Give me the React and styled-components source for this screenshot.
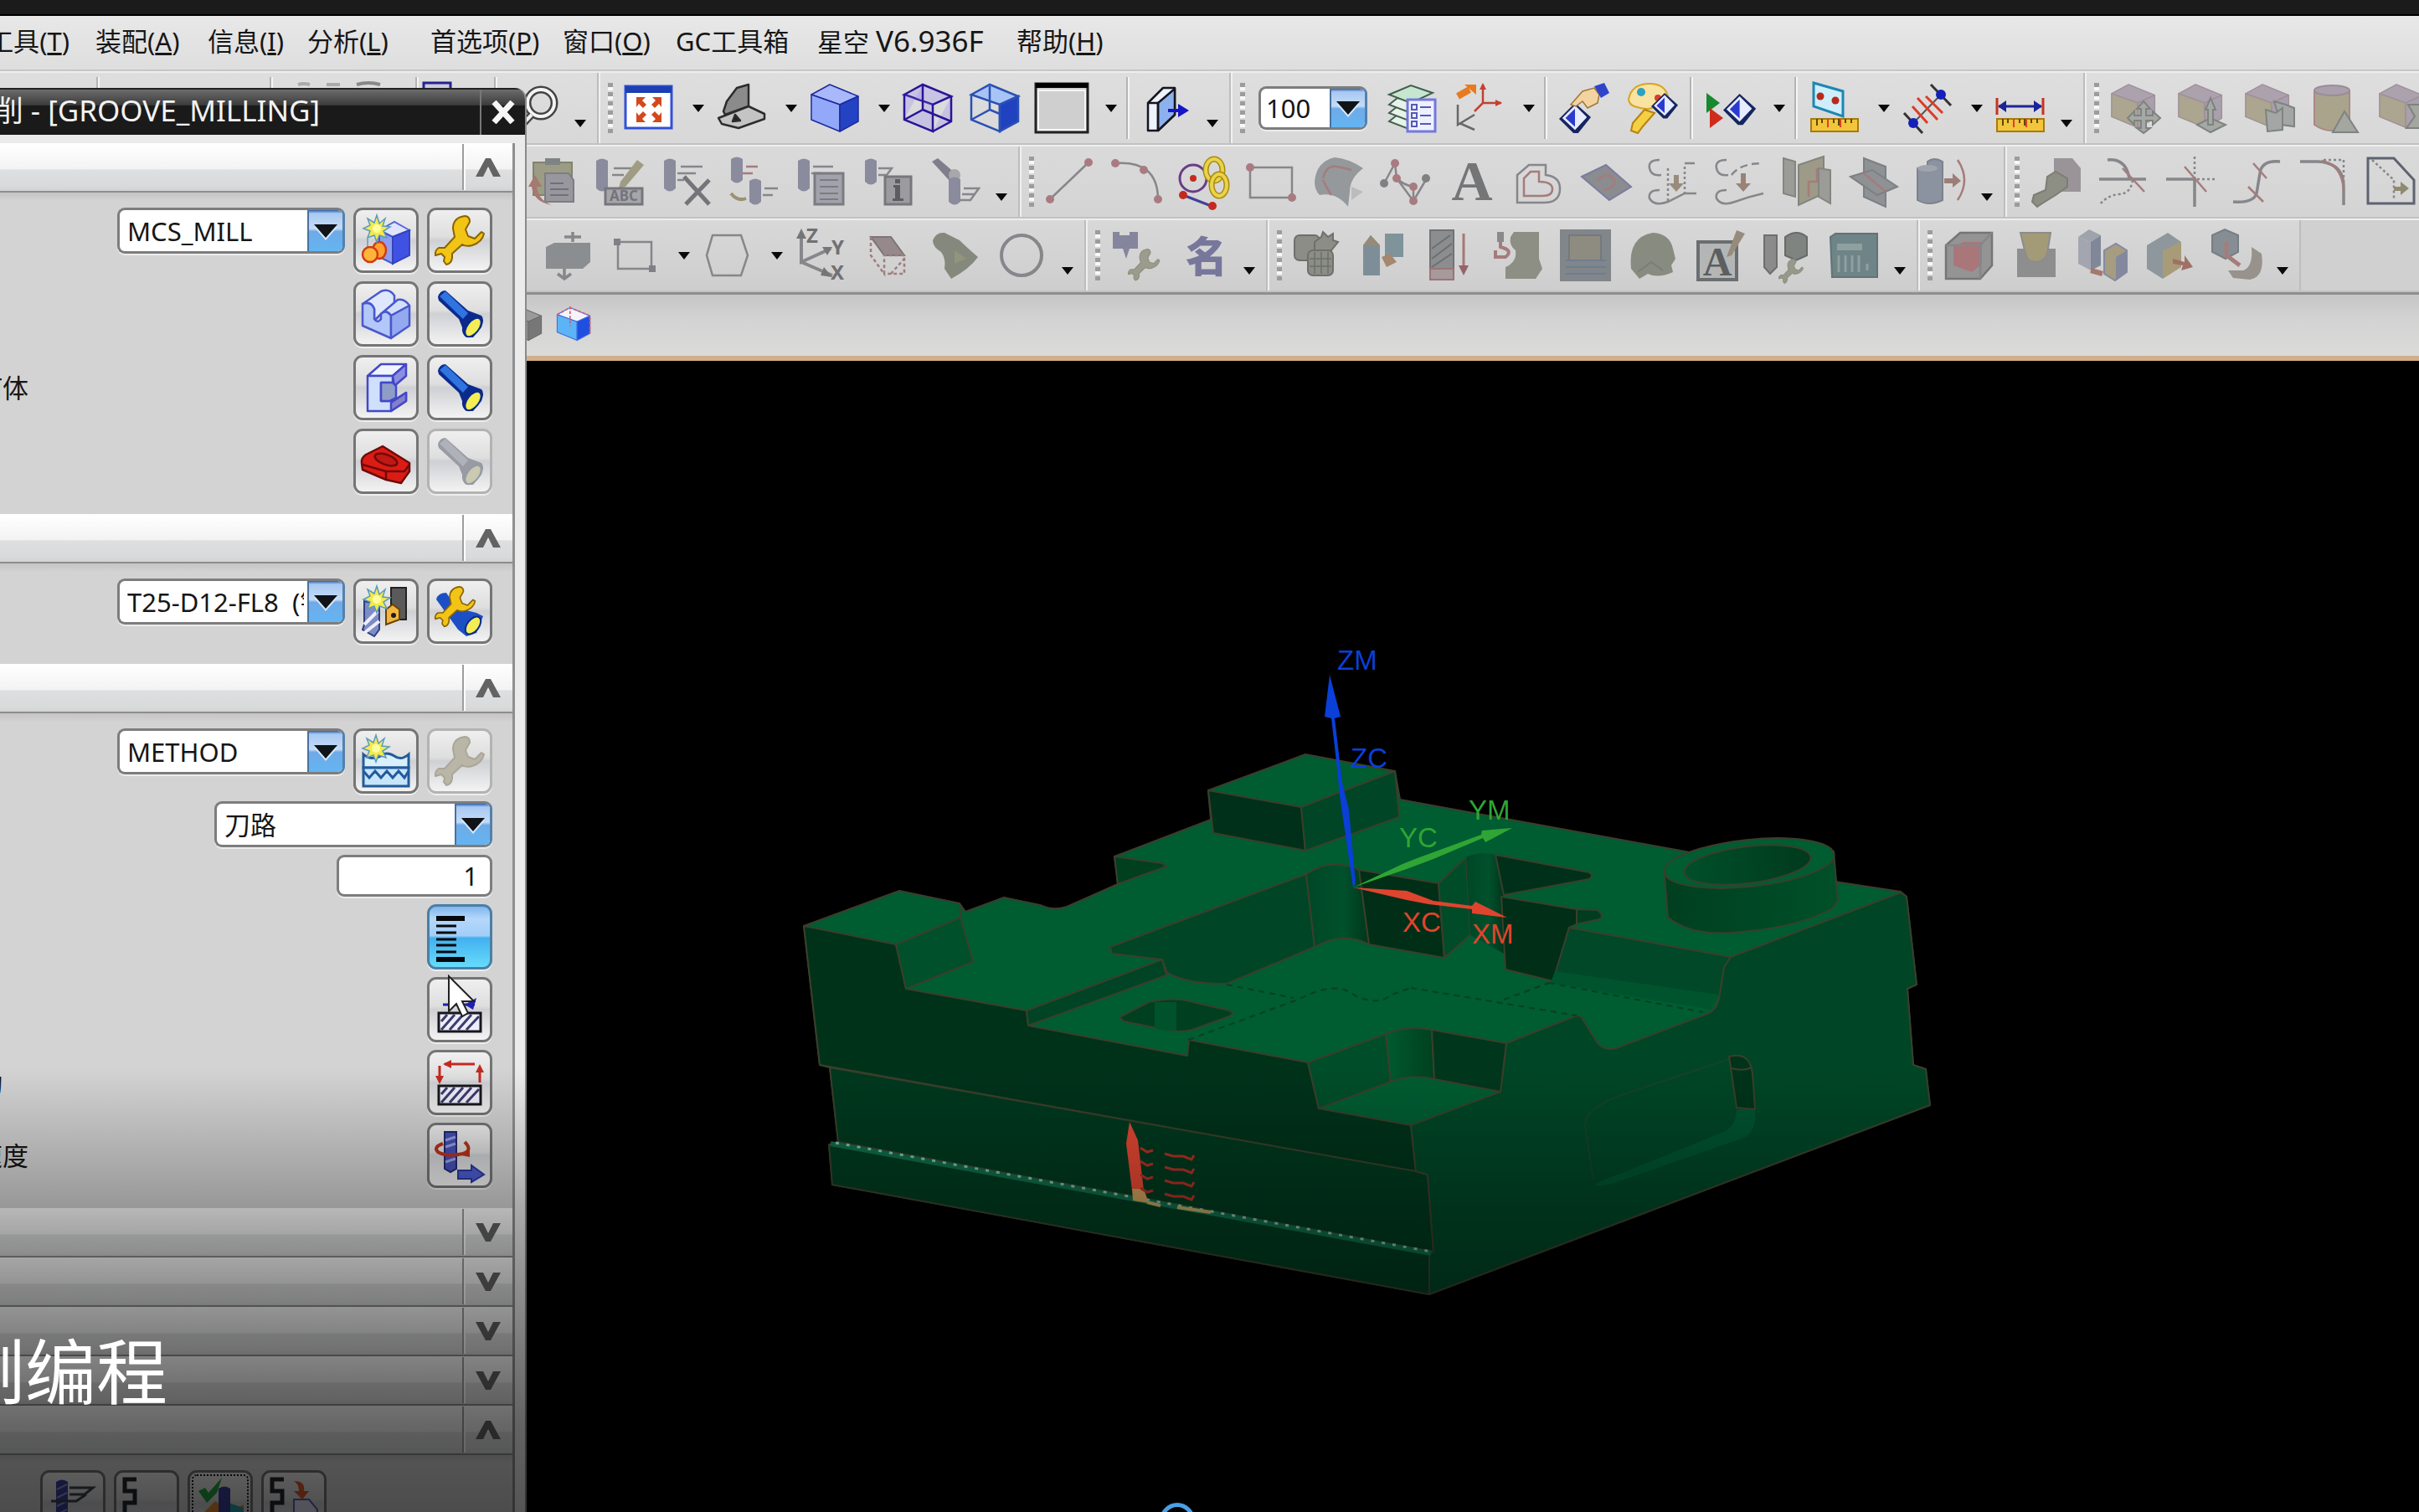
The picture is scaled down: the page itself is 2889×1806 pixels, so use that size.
import React from "react";
import styled, { createGlobalStyle } from "styled-components";

const Global = createGlobalStyle`
  * { box-sizing: border-box; }
  body { margin: 0; background: #000; overflow: hidden; }
  button, input, select { font: inherit; color: inherit; margin: 0; }
`;

const Page = styled.div`
  position: relative;
  display: flex;
  flex-direction: column;
  min-height: 100vh;
  overflow: hidden;
  background: #000;
  color: #161616;
  font: 31px/40px "Noto Sans", "Noto Sans CJK SC", sans-serif;
`;

const TopStrip = styled.div`
  height: 19px;
  background: #1b1b1b;
  border-bottom: 2px solid #000;
`;

/* ---------- menu ---------- */
const MenuBar = styled.nav`
  display: flex;
  align-items: center;
  height: 66px;
  padding-bottom: 4px;
  background: linear-gradient(#e8e8e8, #dedede);
  border-bottom: 2px solid #c6c6c6;
`;

const MenuItem = styled.button`
  flex: none;
  width: ${(p) => p.$w}px;
  padding: 0;
  border: 0;
  background: none;
  text-align: ${(p) => (p.$end ? "right" : "left")};
  padding-right: ${(p) => (p.$end ? 31 : 0)}px;
  white-space: nowrap;
  direction: ${(p) => (p.$end ? "rtl" : "ltr")};
`;

const MenuText = styled.span`
  unicode-bidi: isolate;
  direction: ltr;
`;

const Version = styled.span`
  font-size: 35px;
`;

/* ---------- tool bars ---------- */
const ToolRow = styled.div`
  display: flex;
  height: 88px;
  background: linear-gradient(${(p) => p.$from}, ${(p) => p.$to});
  border-top: 2px solid #eeeeee;
  border-bottom: 2px solid #c2c2c2;
  overflow: hidden;
`;

const Group = styled.div`
  flex: none;
  display: flex;
  align-items: center;
  justify-content: ${(p) => (p.$w ? "flex-end" : "flex-start")};
  width: ${(p) => (p.$w ? p.$w + "px" : "auto")};
  border-right: 2px solid #bdbdbd;
  box-shadow: 2px 0 0 #f0f0f0;
`;

const Rest = styled.div`
  flex: 1;
  background: #d0d0d0;
`;

const Grip = styled.div`
  flex: none;
  width: 20px;
  height: 60px;
  background: repeating-linear-gradient(#9c9c9c 0 5px, #f8f8f8 5px 9px, transparent 9px 11px) 11px 0 / 6px 100% no-repeat;
`;

const Tool = styled.button`
  flex: none;
  display: flex;
  align-items: center;
  justify-content: center;
  width: 80px;
  height: 76px;
  padding: 0;
  border: 0;
  background: none;
`;

const Caret = styled.button`
  flex: none;
  display: flex;
  justify-content: center;
  align-items: center;
  width: ${(p) => (p.$end ? 35 : 31)}px;
  height: 60px;
  padding: ${(p) => (p.$end ? "36px 6px 0 0" : "0 0 0 6px")};
  border: 0;
  background: none;
  &::after {
    content: "";
    border: 7px solid transparent;
    border-top: 9px solid #0a0a0a;
    border-bottom: 0;
  }
`;

const Sep = styled.div`
  flex: none;
  width: 14px;
  height: 74px;
  background: linear-gradient(90deg, #b4b4b4 0 2px, #f5f5f5 2px 4px) 6px 0 / 4px 100% no-repeat;
`;

const Space = styled.div`
  flex: none;
  width: ${(p) => p.$w}px;
`;

const SelectionBar = styled.div`
  display: flex;
  align-items: center;
  height: 82px;
  padding: 0 0 4px 606px;
  gap: 16px;
  border-top: 3px solid #8e8e8e;
  border-bottom: 6px solid #d3ae8a;
  background: linear-gradient(#c6c6c6, #d3d3d3 40%, #dbdbda);
`;

/* ---------- fields ---------- */
const Combo = styled.span`
  flex: none;
  display: grid;
  width: ${(p) => p.$w}px;
  height: ${(p) => p.$h || 55}px;
  margin: ${(p) => p.$m || "0"};
  border: 3px solid #7d7d7d;
  border-right-color: #5580ab;
  border-radius: 9px;
  box-shadow: 0 2px 0 #ececec;
  background: #fff;
  overflow: hidden;
`;

const Select = styled.select`
  grid-area: 1 / 1;
  appearance: none;
  width: 100%;
  height: 100%;
  min-width: 0;
  padding: 0 46px 0 ${(p) => p.$pad || 9}px;
  border: 0;
  background: transparent;
  outline: 0;
`;

const ComboArrow = styled.span`
  grid-area: 1 / 1;
  justify-self: end;
  display: flex;
  align-items: center;
  justify-content: center;
  width: 42px;
  pointer-events: none;
  border-left: 2px solid #49719e;
  background: linear-gradient(#2c62b0 0, #a9c9f2 8%, #c4dbf6 45%, #6faae8 52%, #63b5f2);
  &::after {
    content: "";
    border: 14px solid transparent;
    border-top: 16px solid #101418;
    border-bottom: 0;
    filter: drop-shadow(0 3px 0 #d8eafc);
  }
`;

const NumberInput = styled.input`
  width: 186px;
  height: 50px;
  padding: 0 14px;
  border: 3px solid #7d7d7d;
  border-radius: 9px;
  box-shadow: 0 2px 0 #ececec;
  background: #fff;
  text-align: right;
`;

/* ---------- dialog ---------- */
const Dialog = styled.section`
  position: absolute;
  left: 0;
  top: 105px;
  bottom: 0;
  width: 629px;
  overflow: hidden;
  border-radius: 0 14px 0 0;
  background: #ebebeb;
  border-right: 2px solid #8a8a8a;
`;

const TitleBar = styled.header`
  display: flex;
  justify-content: space-between;
  align-items: center;
  height: 56px;
  color: #f2f2f2;
  border-top: 2px solid #222;
  background: linear-gradient(#6c6c6c, #3c3c3c 34%, #1a1a1a 36%);
`;

const Title = styled.h1`
  display: flex;
  justify-content: flex-end;
  width: 382px;
  margin: 0;
  padding-bottom: 4px;
  overflow: hidden;
  white-space: nowrap;
  font: inherit;
  font-size: 35px;
`;

const Close = styled.button`
  display: flex;
  align-items: center;
  justify-content: center;
  width: 54px;
  height: 54px;
  padding: 0;
  border: 0;
  border-left: 2px solid #777;
  background: none;
`;

const Sections = styled.div`
  margin: 10px 12px 0 0;
  border-right: 3px solid #8f8f8f;
  background: #d3d3d3;
`;

const Head = styled.button`
  display: flex;
  justify-content: flex-end;
  align-items: center;
  width: 100%;
  height: 59px;
  padding: 0;
  border: 0;
  border-bottom: 2px solid #8d8d8d;
  background: linear-gradient(#fff, #f3f3f3 54%, #dedfe0 56%, #d9dadb 90%, #d3d3d3);
`;

const HeadMark = styled.span`
  display: flex;
  justify-content: center;
  align-items: center;
  width: 60px;
  height: 55px;
  border-left: 2px solid #9d9d9d;
  box-shadow: inset 2px 0 0 #fff;
`;

const Body = styled.div`
  display: flex;
  flex-direction: column;
  gap: ${(p) => p.$gap || 10}px;
  padding: 18px 24px 24px 0;
  background: linear-gradient(#c4c4c4, #d3d3d3 10px);
`;

const Line = styled.div`
  display: flex;
  justify-content: space-between;
  align-items: center;
`;

const Label = styled.span`
  display: flex;
  justify-content: flex-end;
  width: ${(p) => p.$w || 0}px;
  overflow: hidden;
  white-space: nowrap;
`;

const Controls = styled.div`
  display: flex;
  align-items: flex-start;
  gap: 10px;
`;

const IconButton = styled.button`
  flex: none;
  display: flex;
  align-items: center;
  justify-content: center;
  width: 78px;
  height: 78px;
  padding: 0;
  border: 3px solid ${(p) => (p.$on ? "#4b7fa6" : p.disabled ? "#b3b3b3" : "#757575")};
  border-radius: 11px;
  outline: ${(p) => (p.$focus ? "2px dotted #111" : "0")};
  outline-offset: -7px;
  box-shadow: 0 2px 0 #eee;
  background: ${(p) =>
    p.$on
      ? "linear-gradient(#7fb6ee, #b5d7fa 20%, #a3cdf7 48%, #43b0ef 52%, #66dcfa)"
      : "linear-gradient(#efefef, #dedede 44%, #cfd0d4 50%, #f3f3f3)"};
`;

const Actions = styled.div`
  display: flex;
  gap: 10px;
  padding-left: 48px;
`;

/* ---------- canvas and overlays ---------- */
const Viewport = styled.main`
  flex: 1;
  background: #000;
`;

const Scene = styled.svg`
  display: block;
  width: 100%;
`;

const Shade = styled.div`
  position: absolute;
  inset: auto 0 0 0;
  height: 530px;
  pointer-events: none;
  background: linear-gradient(
    rgba(0, 0, 0, 0), rgba(0, 0, 0, 0.28) 31%, rgba(0, 0, 0, 0.41) 52%,
    rgba(0, 0, 0, 0.5) 67%, rgba(0, 0, 0, 0.58) 80%, rgba(0, 0, 0, 0.64)
  );
`;

const Caption = styled.p`
  position: absolute;
  left: 0;
  bottom: 110px;
  display: flex;
  justify-content: flex-end;
  width: 200px;
  margin: 0;
  overflow: hidden;
  white-space: nowrap;
  color: #fff;
  font: 85px/124px "Noto Sans CJK SC", sans-serif;
`;

const Pointer = styled.svg`
  position: absolute;
  left: 534px;
  top: 1164px;
`;

const Thumb = styled.span`
  position: absolute;
  left: 1385px;
  bottom: -31px;
  width: 42px;
  height: 42px;
  border: 5px solid #4a9fe6;
  border-radius: 50%;
`;

/* ---------- icon drawings, all on a 60 x 60 field ---------- */
const Cube = ({ a = "#a9b4f4", b = "#7f92f2", c = "#2438b8", s = "#1c2a9c", x = 0, y = 0, k = 1 }) => (
  <g transform={`translate(${x} ${y}) scale(${k})`} stroke={s} strokeWidth="1.5" strokeLinejoin="round">
    <path d="M2 14 24 2 58 16 36 26Z" fill={a} />
    <path d="M2 14 36 26V58L2 44Z" fill={b} />
    <path d="M36 26 58 16V46L36 58Z" fill={c} />
  </g>
);
const Drill = ({ x = 0, y = 0, h = 40, c = "#8b8b9e" }) => (
  <path transform={`translate(${x} ${y})`} d={`M0 3Q7-2 14 3V${h - 4}Q7 ${h + 3} 0 ${h - 4}Z`} fill={c} />
);
const Wrench = ({ f = "#f2c416", s = "#8a6400", x = 0, y = 0, k = 1 }) => (
  <path transform={`translate(${x} ${y}) scale(${k})`} d="M36 1Q22 3 22 16L24 26 12 39 5 39Q0 42 1 48L8 46 12 50 11 55 14 59Q20 58 21 51V46L33 35Q38 38 45 36 57 32 59 22L56 20 48 28 40 25 37 17 42 8Q42 1 36 1Z" fill={f} stroke={s} strokeWidth="2" strokeLinejoin="round" />
);
const Torch = ({ a = "#2f74e0", b = "#0c2a8c", y1 = "#f4ee54" }) => (
  <g>
    <path d="M4 10Q6 2 13 2L40 26 56 32Q60 36 56 46L46 58 38 58Q32 54 33 46L29 36 5 14Z" fill={b} />
    <path d="M6 9 13 3 40 29 34 36Z" fill={a} />
    <ellipse cx="46" cy="46" rx="13" ry="7" transform="rotate(-52 46 46)" fill={y1} stroke={b} strokeWidth="2" />
  </g>
);
const Star = ({ x = 16, y = 14 }) => (
  <g transform={`translate(${x} ${y})`}>
    <path d="M0-16 3-6 10-12 7-3 16-2 8 3 12 11 3 8 0 16-3 8-11 11-8 3-16 0-8-4-11-12-3-7Z" fill="#f5ea4a" stroke="#5a9bbd" strokeWidth="1.5" />
    <circle r="5" fill="#ffffa0" />
  </g>
);
const Diamond = ({ x = 0, y = 0, k = 1 }) => (
  <g transform={`translate(${x} ${y}) scale(${k})`}>
    <path d="M20 0 40 18 24 38 18 38 0 20Z" fill="#15255f" />
    <path d="M20 3 35 18 20 34 4 19Z" fill="#e8ecff" />
    <path d="M20 7V30L8 19Z" fill="#2b3bd0" />
  </g>
);
const Ruler = ({ y = 42 }) => (
  <g>
    <path d={`M2 ${y}H58V${y + 15}H2Z`} fill="#f1c63c" stroke="#a87a10" strokeWidth="2" />
    <path d={`M9 ${y}v8M15 ${y}v5M29 ${y}v5M35 ${y}v8M43 ${y}v5M50 ${y}v5`} stroke="#5e4700" strokeWidth="2" />
    <path d={`M22 ${y}v10M37 ${y}v10`} stroke="#e04020" strokeWidth="2" />
  </g>
);
const GP = { a: "#aba2ae", b: "#aca58f", c: "#a8a0ac", s: "#a08f98" };
const ln = { fill: "none", stroke: "#86868b", strokeWidth: 2.5 };
const red = { fill: "none", stroke: "#a57c7c", strokeWidth: 2.5 };
const Dot = ({ x, y, c = "#a97b80" }) => <circle cx={x} cy={y} r="5" fill={c} />;
const Pass = ({ x = 0, y = 0 }) => (
  <path transform={`translate(${x} ${y})`} d="M2 2H20L15 9H0M-2 16H10L15 9" {...ln} />
);
const Hatch = () => (
  <g>
    <path d="M5 34H55V56H5Z" fill="#eeeefa" stroke="#16161c" strokeWidth="3" />
    <path d="M8 54 24 36M18 54 34 36M28 54 44 36M38 54 53 38M8 44 15 36" stroke="#3c3c6c" strokeWidth="3" />
  </g>
);

const ICONS = {
  windowTop: <g><path d="M-8 0H24V60H-8Z" fill="#ccd" stroke="#24248c" strokeWidth="3" /></g>,
  greyTop: <path d="M16 2Q22 0 30 2M50 2H66" stroke="#aaa" strokeWidth="4" fill="none" />,
  greyTop2: <path d="M6 2Q20-2 34 2" stroke="#888" strokeWidth="4" fill="none" />,
  zoom: <g fill="none"><circle cx="38" cy="24" r="16" stroke="#444" strokeWidth="9" /><circle cx="38" cy="24" r="16" stroke="#f4f4f4" strokeWidth="4" /><path d="M27 38 8 58" stroke="#444" strokeWidth="9" /><path d="M27 38 8 58" stroke="#eee" strokeWidth="4" /></g>,
  fit: <g><path d="M2 4H57V54H2Z" fill="#fff" stroke="#3250d8" strokeWidth="3" /><path d="M2 4H57V12H2Z" fill="#1c3fb4" /><path d="M15 17h11l-4 4 5 5-4 4-5-5-3 4ZM45 17H34l4 4-5 5 4 4 5-5 3 4ZM15 47h11l-4-4 5-5-4-4-5 5-3-4ZM45 47H34l4-4-5-5 4-4 5 5 3-4Z" fill="#d2491c" /></g>,
  section: <g stroke="#2c2c2c" strokeWidth="2.5" strokeLinejoin="round"><path d="M8 34 12 22 24 6 38 2V28L10 38Z" fill="#8b8b8b" /><path d="M2 42 38 28 57 37V43L26 54 6 49Z" fill="#c4c4c4" /><path d="M22 38 28 45 19 46Z" fill="#222" /></g>,
  shaded: <Cube a="#a9b8fb" b="#93a8f8" c="#2443c4" />,
  wire: <g fill="rgba(160,150,240,.35)" stroke="#2a1496" strokeWidth="2.5"><path d="M2 14 24 2 58 16 36 26Z" /><path d="M2 14V44L36 58V26M58 16V46L36 58M24 2V32L2 44M24 32 58 46" /></g>,
  semi: <g stroke="#2a50b4" strokeWidth="2.5" fill="none"><path d="M2 14 24 2 58 16 36 26Z" fill="#a8c4f6" /><path d="M36 26 58 16V46L36 58Z" fill="#2142c0" /><path d="M2 14V44L36 58V26M24 4V32L2 44M24 32 36 37" /></g>,
  pane: <g><path d="M-1 1H61V59H-1Z" fill="#cfcfcf" stroke="#222" strokeWidth="3" /><path d="M2 9H58V56H2Z" fill="none" stroke="#f6f6f6" strokeWidth="2" /><path d="M-1 0H61V6H-1Z" fill="#000" /></g>,
  door: <g stroke="#15151f" strokeWidth="2.5" strokeLinejoin="round"><path d="M8 24 26 6H40V38L20 57H8Z" fill="#eef2fa" /><path d="M20 24 40 7V38L20 57Z" fill="#8db1ee" /><path d="M8 24H20V57" fill="none" /><path d="M32 31h12v-6l13 8-13 8v-6H32Z" fill="#1414c8" stroke="none" /></g>,
  layers: <g stroke="#40604c" strokeWidth="2"><path d="M2 46 12 38 48 46 28 56Z" fill="#e8f2ea" /><path d="M2 36 12 28 48 36 28 46Z" fill="#e8f2ea" /><path d="M2 26 12 18 48 26 28 36Z" fill="#e8f2ea" /><path d="M2 14 28 3 54 12 28 24Z" fill="#c7e6d0" /><path d="M24 20H57V58H24Z" fill="#eef0ff" stroke="#7478dc" strokeWidth="3" /><path d="M29 26h6v6h-6ZM29 36h6v6h-6ZM29 46h6v6h-6ZM39 29h13M39 39h13M39 49h13" fill="none" stroke="#5459b8" /></g>,
  wcs: <g fill="none" strokeWidth="2.5"><path d="M4 16 18 8" stroke="#e87a1e" strokeWidth="8" /><path d="M12 2H26V14Z" fill="#e87a1e" /><path d="M34 2V24L24 34M34 24H56" stroke="#c44030" /><path d="M34 0 30 8h8ZM57 24l-8-4v8Z" fill="#c44030" /><path d="M4 26V50L24 38M6 48 24 56" stroke="#686868" /></g>,
  hand: <g><Diamond x={0} y={24} k={0.95} /><path d="M14 26 28 10 42 6 48 14 46 24 34 30 28 22 20 28Z" fill="#f3d3a0" stroke="#a0763a" strokeWidth="1.5" /><path d="M42 4 54 0 60 12 50 18Z" fill="#2f44c8" /></g>,
  palette: <g><path d="M3 20Q6 2 26 1 46 0 50 16L34 28Q28 34 10 28 4 26 3 20Z" fill="#f8e3a2" stroke="#d9a420" strokeWidth="2" /><circle cx="18" cy="11" r="5" fill="#2da1c0" /><circle cx="38" cy="18" r="4" fill="#d84030" /><Diamond x={30} y={12} k={0.8} /><path d="M22 32 34 36 20 52 14 60 6 57 8 48Z" fill="#f5cf44" stroke="#b48410" strokeWidth="2" /></g>,
  play: <g><path d="M2 12 18 24 2 36Z" fill="#168a2e" /><path d="M6 30 22 42 6 54Z" fill="#d02a1c" /><Diamond x={22} y={13} k={0.98} /></g>,
  measure: <g><path d="M5 0 40 10V40L5 28Z" fill="#cdeefa" stroke="#1e86b4" strokeWidth="3" /><circle cx="13" cy="16" r="4.5" fill="#b8281c" /><circle cx="31" cy="21" r="4.5" fill="#b8281c" /><Ruler y={43} /></g>,
  align: <g><path d="M15 46 46 14" stroke="#555" strokeWidth="2" /><path d="M2 36 24 60M34 2 58 27" stroke="#333" strokeWidth="3" /><path d="M12 28 30 48M18 18 42 44M28 16 48 36" stroke="#dc3c28" strokeWidth="3" /><circle cx="13" cy="48" r="6" fill="#1420b8" /><circle cx="46" cy="14" r="6" fill="#1420b8" /></g>,
  dimension: <g><path d="M2 18V38M57 18V38" stroke="#cc3020" strokeWidth="3" /><path d="M4 28H55" stroke="#1c2496" strokeWidth="3" /><path d="M3 28 13 21V35ZM56 28 46 21V35Z" fill="#1c2496" /><Ruler y={43} /></g>,
  cubeMove: <g><Cube {...GP} k={0.92} /><path d="M40 22l8 9h-5v8h8v-5l9 8-9 8v-5h-8v9h5l-8 6-8-6h5v-9h-8v5l-8-8 8-8v5h8v-8h-5Z" fill="#a6a8a4" stroke="#7d8480" strokeWidth="2" /></g>,
  cubePull: <g><Cube {...GP} k={0.92} /><path d="M24 50 40 42 58 50 40 59Z" fill="#a6a8a4" stroke="#7d8480" strokeWidth="2" /><path d="M40 18 46 32H43V50H37V32H34Z" fill="#a6a8a4" stroke="#7d8480" strokeWidth="2" /></g>,
  cubeSheet: <g><Cube {...GP} k={0.92} /><path d="M36 22 50 26 60 30V52L44 50Z" fill="#a4a6a6" stroke="#7d8480" strokeWidth="2" /><path d="M26 32 38 36 46 30V56L28 58Z" fill="#a4a6a6" stroke="#7d8480" strokeWidth="2" /></g>,
  cylinder: <g><path d="M4 9V50Q24 64 46 50V9" fill="#aaa48c" stroke="#aa8888" strokeWidth="2" /><ellipse cx="25" cy="9" rx="21" ry="6" fill="#a8a0ac" stroke="#9d8b98" strokeWidth="2" /><path d="M40 34 56 59H26Z" fill="#a4a6a0" stroke="#7d8480" strokeWidth="2" /></g>,
  cubeMore: <g><Cube {...GP} k={0.92} /><path d="M60 26H36L44 40 34 54H60" fill="#a4a6a0" stroke="#7d8480" strokeWidth="2" /></g>,

  paste: <g><path d="M6 7H52V46H6Z" fill="#9c9c84" stroke="#82826e" strokeWidth="2" /><path d="M20 2H38V10H20Z" fill="#7e8484" /><path d="M20 20H48L54 28V54H20Z" fill="#97979d" stroke="#7d7d84" strokeWidth="2" /><path d="M26 32H42M26 39H48M26 46H48" stroke="#70707a" strokeWidth="2" /><path d="M8 22 16 36H10Q12 52 28 58 6 54 4 36H0Z" fill="#a5796f" /></g>,
  rename: <g><Drill x={1} y={2} /><path d="M22 14H44M20 22H34" {...ln} /><path d="M50 4 58 10 36 36 28 38 30 30Z" fill="#a09c84" /><path d="M12 38H56V57H12Z" fill="#a6a6aa" stroke="#76767c" strokeWidth="3" /><text x="34" y="53" textAnchor="middle" fontSize="17" fontWeight="700" fill="#74747c">ABC</text></g>,
  remove: <g><Drill x={2} y={2} /><path d="M22 12H48M18 20H40M18 28H26" {...ln} /><path d="M26 24 56 57M56 28 28 57" stroke="#74747a" strokeWidth="5" /></g>,
  transform: <g><Drill x={2} y={0} h={32} /><Drill x={24} y={26} h={32} /><path d="M20 12H34M16 20H28" {...red} /><path d="M42 38H58M40 46H52" {...ln} /><path d="M2 44Q10 54 20 50" stroke="#9a9272" strokeWidth="4" fill="none" /></g>,
  list: <g><Drill x={2} y={2} /><path d="M20 12H44M18 20H30" {...ln} /><path d="M22 20H56V57H22Z" fill="#a2a2aa" stroke="#7b7b82" strokeWidth="3" /><path d="M28 28H50M28 36H50M28 44H50M28 51H50" stroke="#7b7b86" strokeWidth="2" /></g>,
  info: <g><Drill x={2} y={2} h={32} /><path d="M18 14H34L28 22H18" {...ln} /><path d="M26 24H57V57H26Z" fill="#9c9ca0" stroke="#77777c" strokeWidth="3" /><path d="M36 34H44V50H48V53H35V50H38V37H36ZM38 27H44V32H38Z" fill="#5c5c62" /></g>,
  machine: <g><path d="M2 6 9 2 30 20 24 30Z" fill="#7f7f8c" /><circle cx="29" cy="22" r="7" fill="#a8a8ac" /><Drill x={22} y={24} h={34} /><Pass x={38} y={36} /></g>,
  line: <g><path d="M7 50 51 8" {...ln} /><Dot x={6} y={51} /><Dot x={52} y={7} /></g>,
  arc: <g><path d="M4 8Q54 4 55 50" {...ln} /><Dot x={4} y={8} /><Dot x={38} y={16} /><Dot x={55} y={51} /></g>,
  sketch: <g fill="none"><circle cx="17" cy="26" r="16" stroke="#6a3c86" strokeWidth="3" /><circle cx="17" cy="26" r="4" fill="#c42a20" /><ellipse cx="42" cy="16" rx="10" ry="13" stroke="#a88a10" strokeWidth="7" /><ellipse cx="42" cy="16" rx="10" ry="13" stroke="#ead347" strokeWidth="4" /><ellipse cx="48" cy="34" rx="9" ry="13" stroke="#a88a10" strokeWidth="7" /><ellipse cx="48" cy="34" rx="9" ry="13" stroke="#ead347" strokeWidth="4" /><path d="M5 46 41 60" stroke="#42409a" strokeWidth="3" /><circle cx="5" cy="46" r="5" fill="#c42a20" /><circle cx="40" cy="59" r="5" fill="#c42a20" /></g>,
  rect: <g><path d="M5 13H55V49H5Z" {...ln} /><Dot x={5} y={13} /><Dot x={55} y={49} /></g>,
  surface: <g><path d="M2 30Q4 6 26 1 42 2 60 14 44 26 44 42L42 60Q28 42 8 46 2 40 2 30Z" fill="#95999c" /><path d="M12 26Q16 10 28 12T46 16M22 46Q18 40 12 28" {...red} /><path d="M46 36 60 42 46 52Z" fill="#bcbcbc" /></g>,
  spline: <g><path d="M5 32 18 8 20 26M20 26Q28 34 40 36M40 53 56 26M20 26 40 53M40 36V53" {...ln} /><Dot x={5} y={32} c="#808084" /><Dot x={18} y={8} /><Dot x={20} y={26} /><Dot x={40} y={36} /><Dot x={40} y={53} /><Dot x={55} y={26} c="#808084" /></g>,
  text: <text x="30" y="52" textAnchor="middle" fontFamily="Liberation Serif, serif" fontWeight="700" fontSize="68" fill="#737577">A</text>,
  offset: <g><path d="M4 55V22L18 10H38V22Q56 24 55 40 54 55 36 55Z" {...ln} /><path d="M12 47V26L20 18H30V30Q46 30 46 39 46 47 34 47Z" {...red} /></g>,
  patch: <g><path d="M1 24 30 10 60 36 34 52Z" fill="#8a8c90" stroke="#7c7ca0" strokeWidth="2" /><path d="M20 28Q30 18 38 26T28 40" {...red} /></g>,
  project: <g><path d="M14 4Q0 4 2 14 4 24 16 22M14 40Q0 40 2 50 8 60 24 54L44 44H58M44 8H56" {...ln} /><path d="M24 14V54M44 12V44" {...ln} strokeDasharray="3 3" /><path d="M31 22H37V32H43L34 42 25 32H31Z" fill="#9a8c7c" /></g>,
  combine: <g><path d="M14 4Q0 4 2 14 4 24 16 22M14 40Q0 40 2 50 8 60 24 54T58 44" {...ln} /><path d="M20 22Q30 8 58 8" {...ln} strokeDasharray="9 5" /><path d="M31 20H37V32H43L34 42 25 32H31Z" fill="#9a8276" /></g>,
  fold: <g fill="#9b9c98" stroke="#85857f" strokeWidth="2"><path d="M2 2 16 6V48L2 44Z" /><path d="M20 10 50 0V44L20 58Z" fill="#9d9a88" /><path d="M44 14 58 16V56L44 48Z" /><path d="M32 48V30H42V14" {...red} /></g>,
  cross: <g fill="#8f9294" stroke="#7c8082" strokeWidth="2"><path d="M18 2 44 12V60L18 48Z" /><path d="M2 24 28 16 58 36 34 46Z" /><path d="M18 20 44 42" {...red} /></g>,
  wrap: <g><path d="M2 14V52Q16 60 32 52V6Q22 0 14 6V14Z" fill="#8c93a0" stroke="#7b828c" strokeWidth="2" /><ellipse cx="14" cy="14" rx="12" ry="4" fill="#a0a4ac" /><path d="M50 4Q66 28 50 52" {...red} /><path d="M34 26H44V20L54 29 44 37V32H34Z" fill="#9c7e78" /></g>,
  repair: <g><path d="M28 2H50L60 14V42H28Z" fill="#9a9499" /><path d="M20 24 30 18 44 26 44 36 30 46 14 56 8 60 2 54 4 46 18 40Z" fill="#8d8e84" stroke="#7d7e72" strokeWidth="2" /></g>,
  trim: <g><path d="M12 4Q34 2 38 26M2 27H58" {...ln} strokeWidth="3.5" /><path d="M42 28Q40 44 26 45T2 58" {...ln} strokeDasharray="3 3" /><path d="M30 14 56 42" {...red} /></g>,
  corner: <g><path d="M2 27H36V60" {...ln} strokeWidth="3.5" /><path d="M36 0V27H60" {...ln} strokeDasharray="3 3" /><path d="M24 12 50 42" {...red} /></g>,
  sCurve: <g><path d="M58 6Q36 4 34 20L30 44Q26 56 2 54" {...ln} strokeWidth="3.5" /><path d="M26 8 42 26M20 36 38 54" {...red} /></g>,
  fillet: <g><path d="M2 6H24Q54 8 54 36V58" {...ln} strokeWidth="3.5" /><path d="M28 5Q52 10 54 40" {...red} /><path d="M30 4H54V30" {...ln} strokeDasharray="3 3" /></g>,
  chamfer: <g><path d="M3 2H34L58 28V56H3Z" {...ln} stroke="#5f6270" strokeWidth="3" /><path d="M8 4 34 28V52" {...ln} strokeDasharray="3 3" /><path d="M34 36H42V30L52 38 42 46V41H34Z" fill="#8e8a72" /></g>,

  thicken: <g fill="#8b8e90"><path d="M4 20 14 15H57V38L48 46H4Z" /><path d="M36 2V14M26 8H46M26 46V58M18 52 26 58 34 52" {...ln} strokeWidth="3.5" /></g>,
  square: <g><path d="M10 14H50V46H10Z" {...ln} /><path d="M5 10H13V18H5ZM47 42H55V50H47Z" fill="#808086" /></g>,
  hexagon: <path d="M12 6H46L54 30 46 54H12L5 30Z" {...ln} />,
  datum: <g><path d="M7 4V38L42 22M7 38 44 54" {...ln} strokeWidth="4" /><path d="M7-2 1 10H13ZM44 20 32 20 38 30ZM44 56 34 44 30 54Z" fill="#747678" /><g fill="#6f7173" fontSize="24" fontWeight="700"><text x="13" y="15">Z</text><text x="43" y="29">Y</text><text x="42" y="59">X</text></g></g>,
  cage: <g><path d="M10 8H34L50 30H26Z" fill="#96898b" stroke="#807476" strokeWidth="2" /><path d="M10 8V30L26 52V30H50V52H26M34 52 50 34" {...ln} strokeDasharray="4 3" stroke="#a07e7e" /></g>,
  blob: <g><path d="M4 12Q8 2 18 3L36 12Q44 20 58 32 48 46 26 58L18 46Q20 34 14 26Q4 20 4 12Z" fill="#85887c" /><path d="M30 24 44 34 30 40Z" fill="#93947c" /></g>,
  ring: <circle cx="30" cy="30" r="24" {...ln} strokeWidth="4" />,
  clampWrench: <g><path d="M2 2H10V6H22V2H32V22H22L18 34 14 22H2Z" fill="#85859e" /><Wrench f="#9c9c8e" s="#90907e" x={20} y={22} k={0.64} /></g>,
  name: <text x="34" y="50" textAnchor="middle" fontFamily="Noto Sans CJK SC" fontWeight="900" fontSize="50" fill="#77779c">名</text>,
  mesh: <g fill="#8b8d86" stroke="#6d706a" strokeWidth="2"><rect x="2" y="6" width="30" height="30" rx="6" /><path d="M26 14 34 8 36 2 42 8 48 4 48 12 54 14 46 24H26Z" /><rect x="18" y="24" width="30" height="30" rx="6" /><path d="M26 26V52M34 26V52M42 26V52M20 34H46M20 43H46" strokeWidth="1.5" /></g>,
  pencilBlock: <g><path d="M4 18 13 6 24 18V54H4Z" fill="#7e8e98" /><path d="M30 4H52V32H30Z" fill="#7e949a" /><path d="M4 18 13 6 24 18Z" fill="#958b78" /><path d="M26 32 36 28 44 38 32 44Z" fill="#a5866e" /></g>,
  mill: <g><path d="M4 0H32V46H4Z" fill="#8b8d8f" stroke="#707274" strokeWidth="2" /><path d="M6 22 28 6M6 34 30 16M6 44 30 28" stroke="#6c6e70" strokeWidth="2" /><path d="M4 46H32V59H4Z" fill="#a69a9c" stroke="#9a7478" strokeWidth="2" /><path d="M44 4V50" stroke="#a57878" strokeWidth="3" /><path d="M38 42H50L44 54Z" fill="#956468" /></g>,
  probe: <g><path d="M24 2H54V34L58 46 50 58H14V44Q28 38 26 24Q18 18 20 8Z" fill="#8d8e84" /><path d="M4 2H12V14H4Z" fill="#8a8a8a" /><path d="M8 14V20Q24 24 14 32H2V24" {...red} strokeWidth="4" /></g>,
  board: <g><path d="M-1-1H60V61H-1Z" fill="#81868a" /><path d="M10 6H48V36H10Z" fill="#8e8c80" stroke="#75797c" strokeWidth="2" /><path d="M6 44H54M6 52H54M6 36H54" stroke="#6f7c90" strokeWidth="2" /></g>,
  ball: <g><path d="M30 3Q50 4 54 22L57 34 52 42 54 50Q36 58 24 52L14 58 4 46Q0 8 30 3Z" fill="#888b80" /><path d="M12 50 28 38 42 48" fill="none" stroke="#7b7e76" strokeWidth="2" /></g>,
  note: <g><path d="M4 14H50V59H4Z" fill="#b4b6b6" stroke="#6b6e70" strokeWidth="4" /><text x="27" y="54" textAnchor="middle" fontFamily="Liberation Serif, serif" fontWeight="700" fontSize="48" fill="#5c5e60">A</text><path d="M50 0 60 4 44 30 38 32Z" fill="#978b7c" /></g>,
  toolSet: <g><path d="M3 6H18V44L10 52 3 44Z" fill="#8b8b8b" stroke="#6e6e6e" strokeWidth="2" /><path d="M28 8Q42-2 54 8V30L41 36 28 30Z" fill="#808480" stroke="#666a68" strokeWidth="2" /><Wrench f="#96988a" s="#8a8c7c" x={20} y={34} k={0.5} /></g>,
  nc: <g><path d="M2 8 8 4H58V56H4Z" fill="#6f8486" stroke="#607476" strokeWidth="2" /><path d="M10 16H40V24H10Z" fill="#8ea0a0" /><path d="M12 30V50M20 30V50M28 30V50M36 30V50M46 40V48" stroke="#8ea0a0" strokeWidth="3" /></g>,
  redCube: <g><path d="M3 18 20 3H58V42L44 58H3Z" fill="#949494" stroke="#757575" strokeWidth="2.5" /><path d="M12 20 24 14H46V40L34 50 12 42Z" fill="#a9767a" /><path d="M3 18H44V58M44 18 58 3" {...ln} /></g>,
  die: <g><path d="M8 22H54V56H8Z" fill="#8e8e8e" /><path d="M12 3H48L44 28Q40 38 30 38 20 38 18 28Z" fill="#a39a78" stroke="#8c8c8c" strokeWidth="2" /></g>,
  pair: <g><path d="M1 8 14-1 28 6 16 14Z" fill="#9fa3ac" /><path d="M1 8 16 14V48L1 40Z" fill="#a3a6b0" /><path d="M16 14 28 6V42L16 48Z" fill="#7f8798" /><path d="M32 24 46 16 59 24V50L45 60 32 52Z" fill="#a69c80" stroke="#868aa4" strokeWidth="2" /><path d="M46 32 59 24V50L46 60Z" fill="#84889c" /><path d="M16 48 30 52" stroke="#a5786e" strokeWidth="6" /></g>,
  exportBlock: <g><path d="M3 18 28 3 44 14 22 26V58L3 46Z" fill="#8d979c" /><path d="M22 24 44 14V44L22 58Z" fill="#a79b78" /><path d="M34 34 48 38V30L58 44 44 48 46 42 34 40Z" fill="#a07064" /></g>,
  link: <g><path d="M1 6 16-1 32 6V26L17 34 1 26Z" fill="#868e94" stroke="#777e84" strokeWidth="2" /><path d="M18 14V30L34 42" {...red} strokeWidth="5" /><path d="M48 20 60 28Q64 56 46 59L26 57 20 48 38 48Q50 44 48 20Z" fill="#98928c" /></g>,

  newGeom: <g><path d="M22 18 40 8 58 18 38 26Z" fill="#dfe4fd" stroke="#5a66d8" strokeWidth="2" /><path d="M22 18 38 26V58L22 50Z" fill="#8f9df4" stroke="#4452d0" strokeWidth="2" /><path d="M38 26 58 18V48L38 58Z" fill="#3f52e4" stroke="#3444b8" strokeWidth="2" /><path d="M8 28V44M26 26V42" stroke="#7ac" strokeWidth="2" /><ellipse cx="22" cy="42" rx="8" ry="10" fill="#ffa030" stroke="#d03c10" strokeWidth="2.5" /><circle cx="11" cy="47" r="9" fill="#ffb43a" stroke="#d03c10" strokeWidth="2.5" /><Star x={19} y={16} /></g>,
  wrench: <Wrench />,
  wrenchOff: <Wrench f="#b9b6a8" s="#aaa798" />,
  part: <g stroke="#4a58cc" strokeWidth="2.5" strokeLinejoin="round"><path d="M2 18 24 3Q34-1 40 8V18L24 30 16 38V24Q12 14 2 18Z" fill="#dfe7fd" /><path d="M24 30 44 13Q52 11 58 20L36 32Q30 24 24 30Z" fill="#d2dffc" /><path d="M2 18Q12 14 16 24V36Q20 42 24 36V30Q30 24 36 32V59L2 44Z" fill="#b3c8f8" /><path d="M36 32 58 20V44L36 59Z" fill="#93aaf0" /></g>,
  torch: <Torch />,
  torchOff: <Torch a="#b0b2ba" b="#989aa4" y1="#c9cab0" />,
  blank: <g stroke="#4348c8" strokeWidth="2.5" strokeLinejoin="round"><path d="M8 16 24 2H54L38 16Z" fill="#f0f4ff" /><path d="M8 16H38V24H24V46H38L54 36V46L36 58H8Z" fill="#cfe0fd" /><path d="M38 16 54 2V16L40 28Z" fill="#8c8ee0" /><path d="M24 24H38L42 28V42L34 46H24Z" fill="#8e9cc8" /><path d="M36 48 54 36V46L36 58Z" fill="#8580cc" /></g>,
  check: <g stroke="#6e0a0a" strokeWidth="2.5" strokeLinejoin="round"><path d="M1 32Q0 26 6 22L26 12 58 32V42L48 56 30 52 2 40Z" fill="#dc1c14" /><path d="M2 34 30 42 52 42 58 34M30 42V52" fill="none" /><ellipse cx="30" cy="28" rx="14" ry="6" transform="rotate(20 30 28)" fill="#c01812" /></g>,
  newTool: <g><path d="M36 2H54V40H44V28H36Z" fill="#5a5a5a" stroke="#222" strokeWidth="2" /><path d="M30 28 38 22 46 28V40L30 46Z" fill="#f1b640" stroke="#6b4400" strokeWidth="2" /><circle cx="39" cy="35" r="3" fill="#1c1c1c" /><path d="M4 18V46L2 52 16 60 22 52V22Z" fill="#7f8cc4" stroke="#2c3e84" strokeWidth="2" /><path d="M4 46 20 30M4 56 22 42" stroke="#eef" strokeWidth="4" /><Star x={19} y={16} /></g>,
  toolEdit: <g><path d="M2 16Q4 8 14 8L26 26 50 32 58 36 50 56 38 60 28 52Z" fill="#1d4fc4" /><ellipse cx="46" cy="47" rx="12" ry="7" transform="rotate(-52 46 47)" fill="#f4ee54" stroke="#0c2a8c" strokeWidth="2" /><Wrench x={0} y={0} k={0.82} /></g>,
  newMethod: <g><path d="M3 22V38H57V22Q48 30 40 24 30 18 24 24 12 30 3 22Z" fill="#d9effc" stroke="#235a9c" strokeWidth="3" /><path d="M3 38H57V60H3Z" fill="#c6e4fa" stroke="#235a9c" strokeWidth="3" /><path d="M3 42 10 50 17 42 24 50 31 42 38 50 45 42 52 50 57 42" fill="none" stroke="#235a9c" strokeWidth="3" /><Star x={18} y={15} /></g>,
  levels: <g stroke="#05080c"><path d="M2 8H36M2 57H36" strokeWidth="6" /><path d="M2 17H26M2 25H26M2 33H26M2 40H26M2 48H26" strokeWidth="3" /></g>,
  cutParams: <g><path d="M10 24H48" stroke="#2020b0" strokeWidth="3" /><path d="M50 16 36 24 46 30Z" fill="#2020b0" /><Hatch /></g>,
  nonCut: <g><path d="M12 8H48M6 10V26M54 14V30" stroke="#c22a20" strokeWidth="3" /><path d="M10 8 20 3V13ZM6 32 1 22H11ZM54 8 49 18H59Z" fill="#c22a20" /><Hatch /></g>,
  feeds: <g><path d="M12 2H26V46L19 50 12 46Z" fill="#4450b4" stroke="#20286c" strokeWidth="2" /><path d="M13 12 25 8M13 20 25 16M13 38 25 34" stroke="#98a0e0" strokeWidth="3" /><path d="M36 14Q46 24 34 28 14 32 4 26-2 20 10 16" fill="none" stroke="#b8321c" strokeWidth="4" /><path d="M32 30 42 22V32Z" fill="#b8321c" /><path d="M28 48H44V42L59 53 44 62V58H28Z" fill="#4c5cd0" stroke="#283a9c" strokeWidth="2" /></g>,
  genPath: <g><Drill x={10} y={2} h={60} c="#3a3f9c" /><path d="M11 14 23 8M11 24 23 18M11 34 23 28M11 44 23 38" stroke="#8a90cc" strokeWidth="2" /><path d="M26 12H54L44 20H26M4 28H34L46 20" fill="none" stroke="#3c4250" strokeWidth="3" /></g>,
  replay: <path d="M18 2H4V16H16V30H4V48H18" fill="none" stroke="#22262a" strokeWidth="5" />,
  verify: <g><path d="M8 44 24 28 40 40 58 32V60H8Z" fill="#e28a2c" /><path d="M40 30 58 36V60H40Z" fill="#28a0a8" /><Drill x={28} y={10} h={50} c="#3a3f9c" /><path d="M4 16 12 12 16 18 32 0 26 18 14 30Z" fill="#1fa43c" /></g>,
  listOut: <g><path d="M18 2H4V16H16V30H4V48H18" fill="none" stroke="#22262a" strokeWidth="5" /><path d="M30 26H48L58 38V60H30Z" fill="#dfe2f8" stroke="#5c60b0" strokeWidth="2" /><path d="M30 4Q44 4 42 16H48L40 26 30 16H36Q36 8 30 4Z" fill="#dc5a2a" /></g>,
  greyCube: <Cube a="#9a9a9a" b="#8c8c8c" c="#777" s="#6c6c6c" />,
  blueCube: <g><Cube a="#f4f4fa" b="#5cb4f6" c="#1f4fe0" s="#3d6ae0" /><path d="M24 0V34M2 14 24 2 58 16V46" fill="none" stroke="#d8606a" strokeWidth="2.5" strokeDasharray="5 3" /></g>,
};

const Glyph = ({ name, size = 60 }) => (
  <svg width={size} height={size} viewBox="0 0 60 60" overflow="visible" aria-hidden="true">
    {ICONS[name]}
  </svg>
);

const T = ({ i }) => (
  <Tool aria-label={i}>
    <Glyph name={i} />
  </Tool>
);
const Btn = ({ i, ...rest }) => (
  <IconButton aria-label={i} {...rest}>
    <Glyph name={i} />
  </IconButton>
);
const Tools = ({ names }) => names.map((n) => <T key={n} i={n} />);
const More = () => <Caret aria-label="menu" />;
const End = () => <Caret $end aria-label="more tools" />;

const Picker = ({ label, value, w, h, m, pad }) => (
  <Combo $w={w} $h={h} $m={m}>
    <Select aria-label={label} defaultValue={value} $pad={pad}>
      <option>{value}</option>
    </Select>
    <ComboArrow />
  </Combo>
);

const Header = ({ open }) => (
  <Head aria-expanded={!!open} aria-label="section">
    <HeadMark>
      <svg width="32" height="24" viewBox="0 0 32 24" aria-hidden="true">
        <path d={open ? "M1 23 13 1H19L31 23H22L16 11 10 23Z" : "M1 1 13 23H19L31 1H22L16 13 10 1Z"} fill="#636363" />
      </svg>
    </HeadMark>
  </Head>
);

const MENU = [
  ["工具", "T", 114, true],
  ["装配", "A", 134],
  ["信息", "I", 119],
  ["分析", "L", 147],
  ["首选项", "P", 158],
  ["窗口", "O", 135],
];

const edge = { stroke: "#3a3f2c", strokeWidth: 2, strokeLinejoin: "round" };

const Model = () => (
  <Scene viewBox="0 431 2889 1375" preserveAspectRatio="xMinYMin meet" role="img" aria-label="part">
    <defs>
      <linearGradient id="round"><stop offset="0" stopColor="#004626" /><stop offset=".6" stopColor="#00512b" /><stop offset="1" stopColor="#00351b" /></linearGradient>
      <linearGradient id="notch"><stop offset="0" stopColor="#005a30" /><stop offset="1" stopColor="#00401f" /></linearGradient>
      <linearGradient id="boss"><stop offset="0" stopColor="#003f20" /><stop offset="1" stopColor="#005029" /></linearGradient>
      <linearGradient id="bore"><stop offset="0" stopColor="#004f2a" /><stop offset="1" stopColor="#003a1d" /></linearGradient>
    </defs>
    <g {...edge}>
      <path fill="#005c31" d="M960 1106 1074 1064 1146 1079 1153 1089 1199 1072 1242 1081Q1262 1090 1281 1080L1335 1056 1331 1023 1446 979 1443 944 1559 901 1666 921 1672 955 2018 1018 2191 1053 2270 1065 2277 1071 2289 1176 2278 1181 2285 1272 2300 1277 2305 1320 1707 1546 994 1415 990 1367 1001 1364 991 1275 979 1272Z" />
      <path fill="#00321a" d="M960 1106 1070 1128 1082 1181 1226 1207 1228 1225 1418 1261 1420 1242 1562 1269 1575 1324 1685 1344 1691 1399 1699 1401 979 1272Z" />
      <path fill="#00381e" d="M991 1275 1691 1399 1705 1403 1712 1495 1001 1364Z" />
      <path fill="#003a1f" d="M990 1367 1707 1497V1546L994 1415Z" />
      <path fill="#004526" d="M1707 1546V1497L1712 1495 1705 1403 1691 1399 1685 1344 1792 1304 1799 1246 1883 1213 1888 1214 1906 1243Q1914 1256 1930 1252L2036 1212Q2050 1208 2053 1192L2059 1155 2067 1143 2270 1066 2277 1071 2289 1176 2278 1181 2285 1272 2300 1277 2305 1320Z" />
      <path fill="#00502b" d="M1070 1128 1147 1096 1162 1149 1082 1181Z" />
      <path fill="none" d="M1146 1079 1147 1096" />
      <path fill="#00401f" d="M1331 1023 1388 1031 1393 1035 1335 1056Z" />
      <path fill="#00301a" d="M1443 944 1554 964 1559 1016 1449 995Z" />
      <path fill="#004526" d="M1554 964 1666 921 1671 976 1559 1016Z" />
      <path fill="#004526" d="M1326 1131 1560 1044 1570 1131 1465 1175Q1420 1176 1394 1162L1388 1146 1328 1139Z" />
      <path fill="url(#round)" d="M1560 1044Q1590 1024 1623 1039L1635 1128Q1604 1112 1570 1131Z" />
      <path fill="#002e17" d="M1623 1039 1718 1055 1725 1144 1635 1128Z" />
      <path fill="#004c28" d="M1718 1055 1751 1024 1756 1117 1725 1144Z" />
      <path fill="url(#round)" d="M1751 1024Q1768 1016 1786 1021L1796 1069V1139L1756 1117Z" stroke="none" />
      <path fill="#003019" d="M1786 1021 1898 1042Q1904 1046 1898 1050L1796 1069Z" />
      <path fill="#002e17" d="M1793 1071 1883 1086V1104L1874 1108 1855 1172 1798 1158Z" />
      <path fill="#003d20" d="M1883 1086 1908 1087Q1917 1094 1910 1098L1883 1104Z" />
      <path fill="#004828" d="M1874 1108 2067 1143 2059 1155 2053 1192 1857 1164Z" />
      <path fill="#00542d" stroke="none" d="M1857 1160 2053 1188 2044 1206 1852 1174Z" />
      <path fill="#004425" d="M1388 1146 1393 1165 1228 1225 1226 1207Z" />
      <path fill="#003f20" d="M1337 1215Q1350 1208 1372 1197 1390 1192 1412 1194L1468 1207Q1476 1210 1468 1214L1424 1230Q1410 1234 1392 1230L1342 1220Z" />
      <path fill="#00522c" stroke="none" d="M1379 1197H1405V1231H1392L1379 1228Z" />
      <path fill="#004d29" d="M1562 1269 1655 1235 1661 1292 1575 1324Z" />
      <path fill="url(#notch)" d="M1655 1235Q1680 1224 1710 1230L1713 1289Q1686 1283 1661 1292Z" />
      <path fill="#00371c" d="M1710 1230 1799 1246 1792 1304 1713 1289Z" />
      <path fill="url(#boss)" d="M1988 1046 1992 1096Q2020 1118 2070 1114 2150 1108 2190 1084L2195 1076 2190 1017Z" />
      <ellipse cx="2089" cy="1031" rx="102" ry="28" transform="rotate(-6 2089 1031)" fill="#005c31" />
      <ellipse cx="2087" cy="1033" rx="76" ry="22" transform="rotate(-7 2087 1033)" fill="url(#bore)" />
      <path fill="#005230" stroke="none" d="M2074 1325 2096 1325 2096 1340Q2092 1356 2080 1360L1925 1414Q1908 1418 1905 1414L2056 1353Q2074 1346 2074 1325Z" />
      <path fill="#00331a" d="M2065 1262Q2090 1256 2093 1282L2096 1325 2074 1323Z" />
      <path fill="none" d="M2068 1276Q2082 1280 2092 1275" />
      <path fill="none" opacity=".4" d="M2065 1265 1945 1305Q1892 1322 1893 1345L1903 1410" />
      <g fill="none" strokeDasharray="7 6" stroke="#084022">
        <path d="M1850 1174 2034 1209" />
        <path d="M1685 1180 1883 1213M1796 1194 1850 1174M1465 1176 1545 1192" />
        <path d="M1419 1242 1550 1194Q1596 1170 1618 1189 1646 1202 1662 1188L1685 1180" />
      </g>
    </g>
    <path d="M992 1366 1709 1497" stroke="#0e6a48" strokeWidth="6" />
    <path d="M998 1365 1709 1495" stroke="#8ab8a4" strokeWidth="3" strokeDasharray="4 9" />
    <path d="M1349 1340 1359 1362 1366 1422H1352L1345 1366Z" fill="#e04632" />
    <path d="M1352 1420H1366L1372 1437 1353 1434Z" fill="#c99a58" />
    <path d="M1370 1436 1386 1440M1406 1442 1446 1448" stroke="#b4a060" strokeWidth="4" />
    <g fill="none" stroke="#b03024" strokeWidth="3">
      {[0, 16, 32, 48].map((d) => (
        <path key={d} d={`M1362 ${1371 + d}l8 5 7-2M1391 ${1378 + d}l10 3 12 0 10 4 3-5`} />
      ))}
    </g>
    <g fontFamily="Liberation Sans, sans-serif" fontSize="33">
      <g fill="#0a3fd8">
        <path d="M1588 806 1582 856 1590 858 1596 910 1600 950 1616 1060 1619 1056 1611 967 1603 935 1594 858 1601 856Z" />
        <text x="1597" y="800">ZM</text>
        <text x="1613" y="917">ZC</text>
      </g>
      <g fill="#2fa535">
        <path d="M1616 1060 1675 1032 1690 1026 1769 997 1770 992 1806 989 1774 1006 1771 1001 1712 1026 1680 1038Z" />
        <text x="1754" y="979">YM</text>
        <text x="1671" y="1012">YC</text>
      </g>
      <g fill="#e0442e">
        <path d="M1616 1060 1680 1064 1712 1076 1758 1082 1762 1077 1800 1096 1758 1091V1086L1706 1080 1680 1075Z" />
        <text x="1675" y="1113">XC</text>
        <text x="1758" y="1127">XM</text>
      </g>
    </g>
  </Scene>
);

export default function App() {
  return (
    <Page>
      <Global />
      <TopStrip />
      <MenuBar>
        {MENU.map(([name, key, w, end]) => (
          <MenuItem key={name} $w={w} $end={end}>
            <MenuText>{name}(<u>{key}</u>)</MenuText>
          </MenuItem>
        ))}
        <MenuItem $w={169}>GC工具箱</MenuItem>
        <MenuItem $w={238}>星空 <Version>V6.936F</Version></MenuItem>
        <MenuItem $w={110}>帮助(<u>H</u>)</MenuItem>
      </MenuBar>

      <ToolRow $from="#dedede" $to="#d8d8d8">
        <Group $w={715}>
          <Sep />
          <Space $w={193} />
          <Sep />
          <Tools names={["greyTop", "greyTop2"]} />
          <Sep />
          <T i="windowTop" />
          <Sep />
          <T i="zoom" />
          <End />
        </Group>
        <Group>
          <Grip />
          <T i="fit" /><More />
          <T i="section" /><More />
          <T i="shaded" /><More />
          <Tools names={["wire", "semi", "pane"]} /><More />
          <Sep />
          <T i="door" /><End />
        </Group>
        <Group>
          <Grip />
          <Picker label="scale" value="100" w={130} h={52} m="0 14px 0 13px" pad={6} />
          <Tools names={["layers", "wcs"]} /><More />
          <Sep />
          <Tools names={["hand", "palette"]} />
          <Sep />
          <T i="play" /><More />
          <Sep />
          <T i="measure" /><More />
          <T i="align" /><More />
          <T i="dimension" /><End />
        </Group>
        <Group>
          <Grip />
          <Tools names={["cubeMove", "cubePull", "cubeSheet", "cylinder", "cubeMore"]} />
        </Group>
      </ToolRow>

      <ToolRow $from="#dadada" $to="#d4d4d4">
        <Group $w={1218}>
          <Tools names={["paste", "rename", "remove", "transform", "list", "info", "machine"]} />
          <End />
        </Group>
        <Group>
          <Grip />
          <Tools names={["line", "arc", "sketch", "rect", "surface", "spline", "text", "offset", "patch", "project", "combine", "fold", "cross", "wrap"]} />
          <End />
        </Group>
        <Group>
          <Grip />
          <Tools names={["repair", "trim", "corner", "sCurve", "fillet", "chamfer"]} />
        </Group>
      </ToolRow>

      <ToolRow $from="#d8d8d8" $to="#cecece">
        <Group $w={1297}>
          <T i="thicken" />
          <T i="square" /><More />
          <T i="hexagon" /><More />
          <Tools names={["datum", "cage", "blob", "ring"]} />
          <End />
        </Group>
        <Group>
          <Grip />
          <Tools names={["clampWrench", "name"]} />
          <End />
        </Group>
        <Group>
          <Grip />
          <Tools names={["mesh", "pencilBlock", "mill", "probe", "board", "ball", "note", "toolSet", "nc"]} />
          <End />
        </Group>
        <Group>
          <Grip />
          <Tools names={["redCube", "die", "pair", "exportBlock", "link"]} />
          <End />
        </Group>
        <Rest />
      </ToolRow>

      <SelectionBar>
        <Glyph name="greyCube" size={42} />
        <Glyph name="blueCube" size={42} />
      </SelectionBar>

      <Viewport>
        <Model />
      </Viewport>

      <Dialog aria-label="GROOVE_MILLING">
        <TitleBar>
          <Title>削 - [GROOVE_MILLING]</Title>
          <Close aria-label="close">
            <svg width="28" height="28" viewBox="0 0 28 28" aria-hidden="true">
              <path d="M3 2 25 26M25 2 3 26" stroke="#f6f6f6" strokeWidth="7" />
            </svg>
          </Close>
        </TitleBar>
        <Sections>
          <Header open />
          <Body>
            <Line>
              <Label />
              <Controls>
                <Picker label="geometry" value="MCS_MILL" w={272} />
                <Btn i="newGeom" />
                <Btn i="wrench" />
              </Controls>
            </Line>
            <Line>
              <Label />
              <Controls><Btn i="part" /><Btn i="torch" /></Controls>
            </Line>
            <Line>
              <Label $w={34}>何体</Label>
              <Controls><Btn i="blank" /><Btn i="torch" /></Controls>
            </Line>
            <Line>
              <Label />
              <Controls><Btn i="check" /><Btn i="torchOff" disabled /></Controls>
            </Line>
          </Body>
          <Header open />
          <Body>
            <Line>
              <Label />
              <Controls>
                <Picker label="tool" value={"T25-D12-FL8\u00a0\u00a0(铣刀)"} w={272} />
                <Btn i="newTool" />
                <Btn i="toolEdit" />
              </Controls>
            </Line>
          </Body>
          <Header open />
          <Body $gap={9}>
            <Line>
              <Label />
              <Controls>
                <Picker label="method" value="METHOD" w={272} />
                <Btn i="newMethod" />
                <Btn i="wrenchOff" disabled />
              </Controls>
            </Line>
            <Line>
              <Label />
              <Picker label="pattern" value="刀路" w={332} />
            </Line>
            <Line>
              <Label />
              <NumberInput aria-label="count" defaultValue="1" />
            </Line>
            <Line>
              <Label />
              <Btn i="levels" $on />
            </Line>
            <Line>
              <Label />
              <Btn i="cutParams" />
            </Line>
            <Line>
              <Label $w={3}>动</Label>
              <Btn i="nonCut" />
            </Line>
            <Line>
              <Label $w={34}>速度</Label>
              <Btn i="feeds" />
            </Line>
          </Body>
          <Header />
          <Header />
          <Header />
          <Header />
          <Header open />
          <Body>
            <Actions>
              <Btn i="genPath" />
              <Btn i="replay" />
              <Btn i="verify" $focus />
              <Btn i="listOut" />
            </Actions>
          </Body>
        </Sections>
      </Dialog>

      <Shade />
      <Pointer width="36" height="54" viewBox="0 0 36 54" aria-hidden="true">
        <path d="M2 2V44L11 35 18 50 25 46 18 32H32Z" fill="#fff" stroke="#222" strokeWidth="2" />
      </Pointer>
      <Caption>例编程</Caption>
      <Thumb />
    </Page>
  );
}
